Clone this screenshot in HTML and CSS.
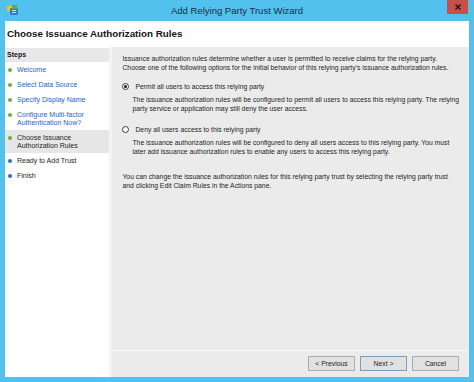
FILE: index.html
```html
<!DOCTYPE html>
<html>
<head>
<meta charset="utf-8">
<link rel="stylesheet" href="styles.css">
</head>
<body>
<div class="window">
  <div class="titlebar">
    <svg class="app-icon" viewBox="0 0 12 11" width="12" height="11">
      <rect x="0" y="1" width="5" height="5" fill="#e8c33a"/>
      <rect x="3" y="3" width="8" height="7" rx="1" fill="#2f7fc8"/>
      <rect x="5" y="0" width="5" height="4" fill="#59b043"/>
      <rect x="5" y="5" width="4" height="1" fill="#bfe3f5"/>
      <rect x="5" y="7" width="4" height="1" fill="#bfe3f5"/>
    </svg>
    <div class="title">Add Relying Party Trust Wizard</div>
    <div class="close">
      <svg viewBox="0 0 6 6" width="6" height="6"><path d="M0.5 0.5 L5.5 5.5 M5.5 0.5 L0.5 5.5" stroke="#2b1512" stroke-width="1.5"/></svg>
    </div>
  </div>
  <div class="frame">
    <div class="page-header">Choose Issuance Authorization Rules</div>
    <div class="body">
      <div class="steps">
        <div class="steps-head">Steps</div>
        <ul class="step-list">
          <li class="step done"><span class="dot"></span><span class="link">Welcome</span></li>
          <li class="step done"><span class="dot"></span><span class="link">Select Data Source</span></li>
          <li class="step done"><span class="dot"></span><span class="link">Specify Display Name</span></li>
          <li class="step done"><span class="dot"></span><span class="link">Configure Multi-factor<br>Authentication Now?</span></li>
          <li class="step done current"><span class="dot"></span><span>Choose Issuance<br>Authorization Rules</span></li>
          <li class="step todo"><span class="dot"></span><span>Ready to Add Trust</span></li>
          <li class="step todo"><span class="dot"></span><span>Finish</span></li>
        </ul>
      </div>
      <div class="divider"></div>
      <div class="content">
        <div class="main">
          <p class="intro">Issuance authorization rules determine whether a user is permitted to receive claims for the relying party.<br>Choose one of the following options for the initial behavior of this relying party’s issuance authorization rules.</p>
          <div class="option first"><span class="radio checked"></span><span>Permit all users to access this relying party</span></div>
          <p class="desc">The issuance authorization rules will be configured to permit all users to access this relying party. The relying<br>party service or application may still deny the user access.</p>
          <div class="option second"><span class="radio"></span><span>Deny all users access to this relying party</span></div>
          <p class="desc">The issuance authorization rules will be configured to deny all users access to this relying party. You must<br>later add issuance authorization rules to enable any users to access this relying party.</p>
          <p class="note">You can change the issuance authorization rules for this relying party trust by selecting the relying party trust<br>and clicking Edit Claim Rules in the Actions pane.</p>
        </div>
        <div class="buttons">
          <div class="btn">&lt; Previous</div>
          <div class="btn primary">Next &gt;</div>
          <div class="btn">Cancel</div>
        </div>
      </div>
    </div>
  </div>
</div>
</body>
</html>
```

FILE: styles.css
```css
* { box-sizing: border-box; }
html, body { margin: 0; padding: 0; }
body {
  width: 474px;
  height: 382px;
  overflow: hidden;
  font-family: "Liberation Sans", Arial, sans-serif;
  color: #1e1e1e;
}
.window {
  width: 474px;
  height: 382px;
  background: #52c1ed;
  padding: 0 5px 5px;
  display: flex;
  flex-direction: column;
}
.titlebar {
  height: 21px;
  display: grid;
  grid-template-columns: 1fr auto 1fr;
  align-items: start;
}
.app-icon {
  margin-top: 5px;
  margin-left: 2px;
  display: block;
}
.title {
  font-size: 9.5px;
  line-height: 21px;
  color: #1f2d3d;
}
.close {
  justify-self: end;
  width: 21px;
  height: 14px;
  margin-right: 1px;
  background: #c7504b;
  display: flex;
  align-items: center;
  justify-content: center;
}
.close svg { display: block; }
.frame {
  flex: 1;
  background: #fff;
  display: flex;
  flex-direction: column;
}
.page-header {
  height: 26px;
  line-height: 26px;
  padding-left: 2px;
  font-weight: bold;
  font-size: 9.8px;
  color: #151515;
}
.body {
  flex: 1;
  display: flex;
}
.steps {
  width: 105px;
  background: #fff;
}
.steps-head {
  margin-top: 1px;
  height: 14px;
  line-height: 14px;
  padding-left: 2px;
  background: #e8e8e8;
  font-weight: bold;
  font-size: 7px;
  color: #151515;
}
.step-list {
  list-style: none;
  margin: 0;
  padding: 0;
}
.step {
  display: flex;
  align-items: flex-start;
  gap: 5px;
  padding: 3.5px 0 3.5px 3px;
  font-size: 7px;
  line-height: 8px;
  color: #1e1e1e;
}
.step.current { background: #e6e6e6; }
.dot {
  width: 4px;
  height: 4px;
  margin-top: 2px;
  border-radius: 50%;
  flex: none;
}
.done .dot { background: #66b13a; }
.todo .dot { background: #2e6bd6; }
.link { color: #2462d2; }
.divider {
  width: 4px;
  background: #f3f3f3;
}
.content {
  flex: 1;
  background: #ebebeb;
  display: flex;
  flex-direction: column;
}
.main {
  flex: 1;
  padding: 7px 10px 0;
  font-size: 6.8px;
  line-height: 9.3px;
  white-space: nowrap;
}
.main p { margin: 0; }
.option {
  display: flex;
  align-items: center;
  gap: 6px;
}
.option.first { margin-top: 9.3px; }
.option.second { margin-top: 11px; }
.radio {
  width: 7px;
  height: 7px;
  border: 1px solid #3a3a3a;
  border-radius: 50%;
  background: #fff;
  flex: none;
  display: flex;
  align-items: center;
  justify-content: center;
}
.radio.checked::after {
  content: "";
  width: 3px;
  height: 3px;
  border-radius: 50%;
  background: #1a1a1a;
}
.main .desc {
  margin-top: 4px;
  padding-left: 10px;
}
.main .note { margin-top: 15px; }
.buttons {
  height: 27px;
  border-top: 1px solid #f9f9f9;
  display: flex;
  justify-content: flex-end;
  gap: 5px;
  padding: 5px 10px 0 0;
}
.btn {
  width: 47px;
  height: 15px;
  border: 1px solid #adadad;
  background: #e1e1e1;
  font-size: 6.8px;
  line-height: 13px;
  text-align: center;
  color: #1e1e1e;
}
.btn.primary { border-color: #7b9cc4; }
```
